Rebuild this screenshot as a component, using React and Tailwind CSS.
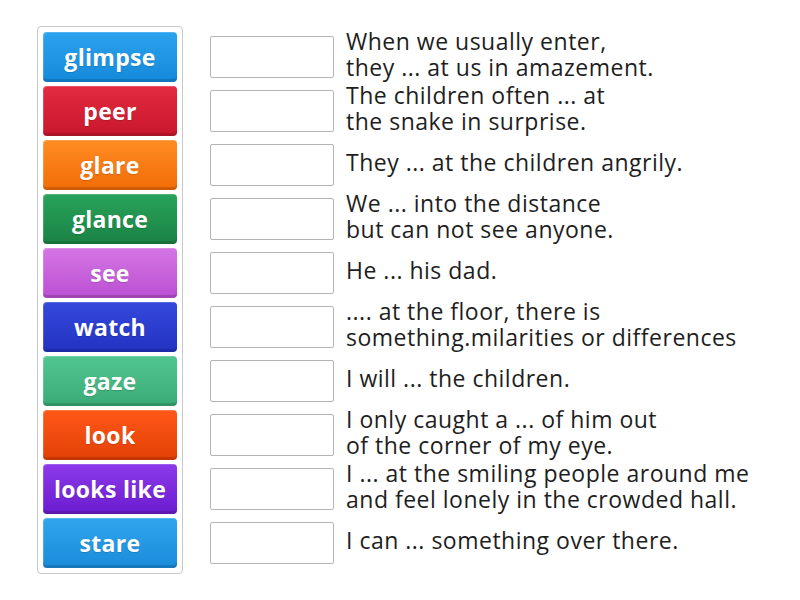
import React from 'react';

const words = [
  { label: 'glimpse', cls: 'bg-[linear-gradient(#2ca3ee,#1489da)]' },
  { label: 'peer', cls: 'bg-[linear-gradient(#e32a40,#c8172d)]' },
  { label: 'glare', cls: 'bg-[linear-gradient(#ff8c24,#f26c06)]' },
  { label: 'glance', cls: 'bg-[linear-gradient(#28a35a,#1b8244)]' },
  { label: 'see', cls: 'bg-[linear-gradient(#d576e4,#bb4fd2)]' },
  { label: 'watch', cls: 'bg-[linear-gradient(#3448da,#2233c2)]' },
  { label: 'gaze', cls: 'bg-[linear-gradient(#52c690,#3aab76)]' },
  { label: 'look', cls: 'bg-[linear-gradient(#ff5818,#e24006)]' },
  { label: 'looks like', cls: 'bg-[linear-gradient(#8c3aea,#6b1ccf)]' },
  { label: 'stare', cls: 'bg-[linear-gradient(#30a6ee,#1a8bda)]' },
];

const sentences = [
  ['When we usually enter,', 'they ... at us in amazement.'],
  ['The children often ... at', 'the snake in surprise.'],
  ['They ... at the children angrily.'],
  ['We ... into the distance', 'but can not see anyone.'],
  ['He ... his dad.'],
  ['.... at the floor, there is', 'something.milarities or differences'],
  ['I will ... the children.'],
  ['I only caught a ... of him out', 'of the corner of my eye.'],
  ['I ... at the smiling people around me', 'and feel lonely in the crowded hall.'],
  ['I can ... something over there.'],
];

export default function App() {
  return (
    <div className="w-[800px] h-[600px] bg-white font-['Open_Sans',sans-serif]">
      <div className="flex items-start pt-[26px] pl-[37px]">
        <div className="w-[146px] border border-[#c8c8c8] rounded-[4px] p-[5px] flex flex-col gap-[4px] bg-white">
          {words.map((w) => (
            <div
              key={w.label}
              className={`h-[50px] rounded-[4px] flex items-center justify-center text-white font-bold text-[23px] tracking-[0.3px] shadow-[inset_0_-3px_0_rgba(0,0,0,0.14),inset_1px_1px_0_rgba(255,255,255,0.18)] [text-shadow:0_1px_1px_rgba(0,0,0,0.15)] ${w.cls}`}
            >
              {w.label}
            </div>
          ))}
        </div>
        <div className="ml-[27px] pt-[6px] flex flex-col gap-[4px]">
          {sentences.map((s, i) => (
            <div key={i} className="h-[50px] flex items-center">
              <div className="w-[124px] h-[42px] border border-[#b4b4b4] rounded-[2px] bg-white shrink-0" />
              <div className="ml-[12px] pb-[6px] text-[23px] leading-[26px] tracking-[0.5px] text-[#1e1e1e] whitespace-nowrap">
                {s.map((line, j) => (
                  <div key={j}>{line}</div>
                ))}
              </div>
            </div>
          ))}
        </div>
      </div>
    </div>
  );
}
